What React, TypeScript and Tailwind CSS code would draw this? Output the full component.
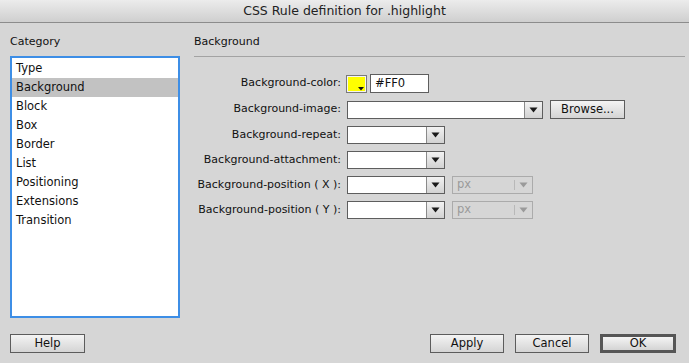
import React from "react";

const font = { fontFamily: '"DejaVu Sans", "Lucida Grande", sans-serif' };

function Tri({ disabled }: { disabled?: boolean }) {
  return (
    <svg width="9" height="6" viewBox="0 0 9 6">
      <path d="M0.5 0.5 L8.5 0.5 L4.5 5.5 Z" fill={disabled ? "#9a9a9a" : "#1a1a1a"} />
    </svg>
  );
}

function Select({ w, disabled, text }: { w: string; disabled?: boolean; text?: string }) {
  if (disabled) {
    return (
      <div className={`${w} h-[18px] flex border border-[#ababab] bg-[#d6d6d6]`}>
        <div className="flex-1 flex items-center pl-[4px] text-[11.5px] text-[#9a9a9a]">{text}</div>
        <div className="w-[18px] flex items-center justify-center relative">
          <div className="absolute left-0 top-[3px] bottom-[3px] w-px bg-[#b8b8b8]" />
          <Tri disabled />
        </div>
      </div>
    );
  }
  return (
    <div className={`${w} h-[18px] flex border border-[#5e5e5e] bg-white`}>
      <div className="flex-1" />
      <div className="w-[18px] border-l border-[#8a8a8a] bg-gradient-to-b from-[#f2f2f2] to-[#d2d2d2] flex items-center justify-center">
        <Tri />
      </div>
    </div>
  );
}

function Btn({ children, w, ok }: { children: React.ReactNode; w: string; ok?: boolean }) {
  return (
    <div
      className={`${w} h-[19px] flex items-center justify-center text-[11.5px] text-[#111] bg-gradient-to-b from-[#f4f4f4] to-[#d4d4d4] ${
        ok ? "border-[3px] border-[#565656]" : "border border-[#5c5c5c]"
      }`}
    >
      {children}
    </div>
  );
}

export default function App() {
  const items = ["Type", "Background", "Block", "Box", "Border", "List", "Positioning", "Extensions", "Transition"];
  const labelCls = "text-right text-[11px] text-[#111] whitespace-nowrap h-[18px] flex items-center justify-end";
  return (
    <div className="w-[689px] h-[363px] bg-[#d6d6d6] flex flex-col overflow-hidden" style={font}>
      <div className="h-[23px] shrink-0 bg-gradient-to-b from-[#ececec] to-[#cfcfcf] border-b border-[#8c8c8c] flex items-center justify-center text-[12.5px] text-[#222]">
        CSS Rule definition for .highlight
      </div>
      <div className="flex flex-1">
        <div className="w-[180px] pl-[10px] flex flex-col">
          <div className="h-[33px] flex items-end pb-[6px] text-[11px] text-[#111]">Category</div>
          <div className="w-[170px] h-[262px] bg-white border-2 border-[#3d8ee6] pt-[1px]">
            {items.map((it) => (
              <div
                key={it}
                className={`h-[19px] flex items-center pl-[4px] text-[11.5px] text-[#111] ${it === "Background" ? "bg-[#c2c2c2]" : ""}`}
              >
                {it}
              </div>
            ))}
          </div>
        </div>
        <div className="flex-1 pl-[14px] pr-[4px] flex flex-col">
          <div className="h-[33px] flex items-end pb-[6px] text-[11px] text-[#111]">Background</div>
          <div className="h-px bg-[#a3a3a3]" />
          <div className="mt-[17px] grid grid-cols-[147px_1fr] gap-x-[5px] gap-y-[7px]">
            <div className={labelCls}>Background-color:</div>
            <div className="flex items-center gap-[3px]">
              <div className="w-[21px] h-[18px] border border-[#7a7a7a] bg-[#f4f4f4] p-[1px] relative">
                <div className="w-full h-full bg-[#ffff00]" />
                <svg className="absolute right-[2px] bottom-[1px]" width="6" height="4" viewBox="0 0 6 4">
                  <path d="M0 0 L6 0 L3 3.5 Z" fill="#111" />
                </svg>
              </div>
              <div className="w-[59px] h-[19px] border border-[#5e5e5e] bg-white flex items-center pl-[4px] text-[11.5px] text-[#111]">
                #FF0
              </div>
            </div>

            <div className={labelCls}>Background-image:</div>
            <div className="flex items-center gap-[7px] pl-[1px]">
              <Select w="w-[196px]" />
              <Btn w="w-[75px]">Browse...</Btn>
            </div>

            <div className={labelCls}>Background-repeat:</div>
            <div className="flex items-center pl-[1px]">
              <Select w="w-[98px]" />
            </div>

            <div className={labelCls}>Background-attachment:</div>
            <div className="flex items-center pl-[1px]">
              <Select w="w-[98px]" />
            </div>

            <div className={labelCls}>Background-position ( X ):</div>
            <div className="flex items-center gap-[7px] pl-[1px]">
              <Select w="w-[98px]" />
              <Select w="w-[81px]" disabled text="px" />
            </div>

            <div className={labelCls}>Background-position ( Y ):</div>
            <div className="flex items-center gap-[7px] pl-[1px]">
              <Select w="w-[98px]" />
              <Select w="w-[81px]" disabled text="px" />
            </div>
          </div>
        </div>
      </div>
      <div className="h-[29px] shrink-0 flex items-start pl-[10px] pr-[13px]">
        <Btn w="w-[75px]">Help</Btn>
        <div className="flex-1" />
        <div className="flex gap-[11px]">
          <Btn w="w-[74px]">Apply</Btn>
          <Btn w="w-[74px]">Cancel</Btn>
          <Btn w="w-[76px]" ok>OK</Btn>
        </div>
      </div>
    </div>
  );
}
